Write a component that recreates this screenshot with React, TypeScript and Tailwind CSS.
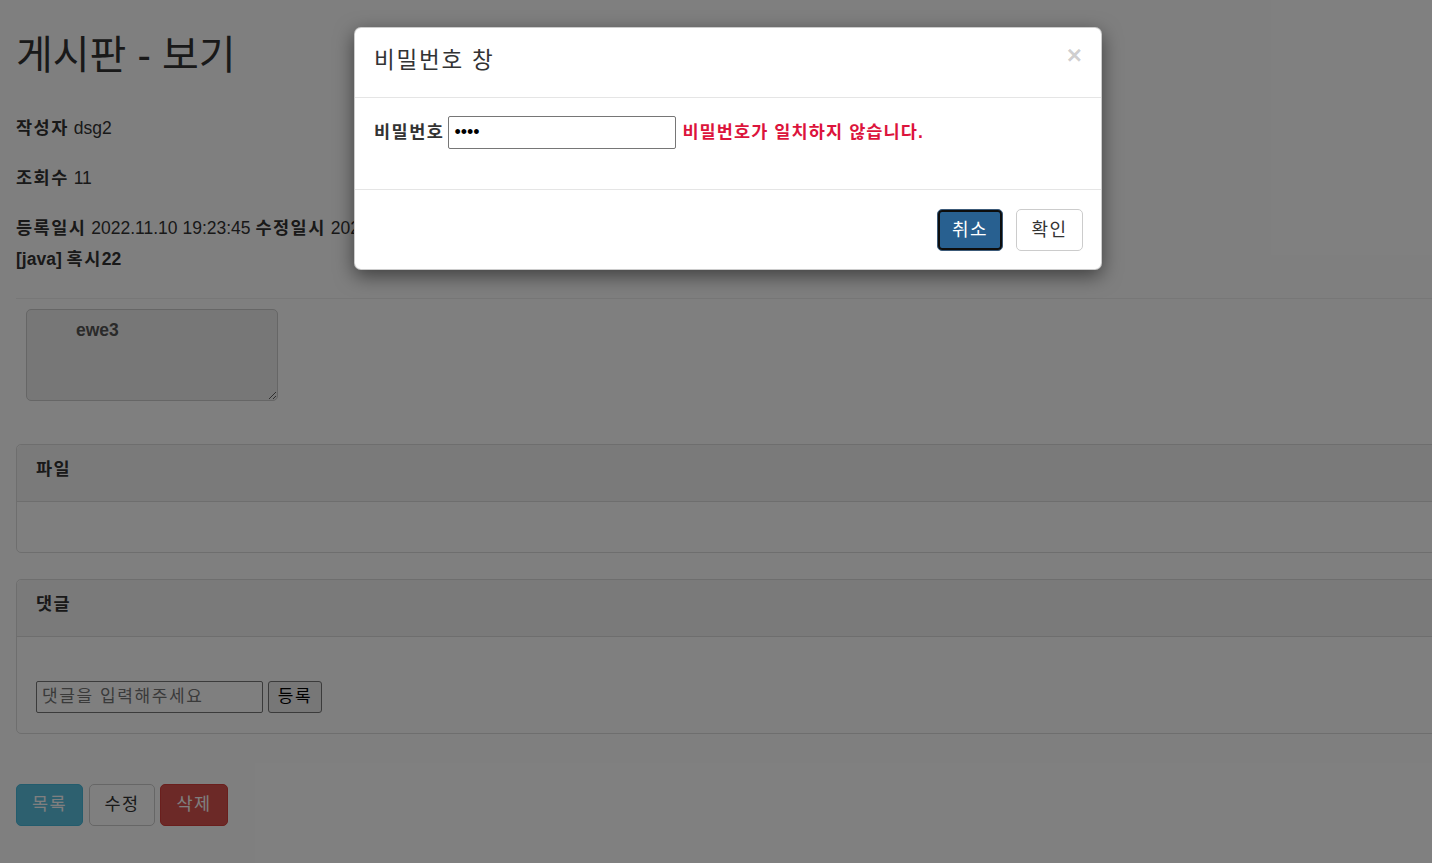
import React from "react";

const font = "font-['Liberation_Sans','Noto_Sans_CJK_KR',sans-serif]";

function Panel({ title, children, bodyClass }: { title: string; children?: React.ReactNode; bodyClass: string }) {
  return (
    <div className="rounded-[5px] border border-[#ddd] bg-white">
      <div className="h-[57px] rounded-t-[5px] border-b border-[#ddd] bg-[#f5f5f5] px-[19px] pt-[12px] font-bold tracking-[1.5px] text-[#333]">
        {title}
      </div>
      <div className={bodyClass}>{children}</div>
    </div>
  );
}

export default function App() {
  return (
    <div className={`relative h-[863px] w-full overflow-hidden bg-white text-[17.5px] leading-[25px] text-[#333] ${font}`}>
      {/* page under the modal */}
      <div className="w-[1480px] pl-4 pt-[30px]">
        <h1 className="m-0 h-[50px] text-[40px] font-normal leading-[50px]">게시판 - 보기</h1>
        <div className="mt-[35.5px]">
          <b className="tracking-[1.5px]">작성자</b> dsg2
        </div>
        <div className="mt-[25px]">
          <b className="tracking-[1.5px]">조회수</b> 11
        </div>
        <div className="mt-[25px] whitespace-nowrap">
          <b className="tracking-[1.5px]">등록일시</b> 2022.11.10 19:23:45 <b className="tracking-[1.5px]">수정일시</b> 2022.11.10 19:23:45
        </div>
        <div className="mt-[6px] font-bold">
          [java] <span className="tracking-[1.5px]">혹시</span>22
        </div>
        <hr className="mt-[26px] border-0 border-t border-[#eee]" />
        <textarea
          readOnly
          value="ewe3"
          className={`ml-[10px] mt-[10px] block h-[92px] w-[252px] rounded-[5px] border border-[#ccc] bg-[#eee] pl-[49px] pt-[8px] text-[17.5px] font-bold leading-[25px] text-[#555] ${font}`}
        />
        <div className="mt-[43px]">
          <Panel title="파일" bodyClass="h-[50px]" />
        </div>
        <div className="mt-[26px]">
          <Panel title="댓글" bodyClass="h-[96px] px-[19px] pt-[44px]">
            <div className="flex items-center">
              <input
                placeholder="댓글을 입력해주세요"
                className={`h-[32px] w-[227px] rounded-[2px] border border-[#767676] px-[5px] text-[17px] tracking-[1.6px] placeholder:text-[#757575] ${font}`}
              />
              <button className="ml-[5px] h-[32px] w-[54px] rounded-[3px] border border-[#767676] bg-[#efefef] text-[17px] tracking-[1.5px] text-black">
                등록
              </button>
            </div>
          </Panel>
        </div>
        <div className="mt-[50px] flex tracking-[1.5px]">
          <button className="h-[42px] w-[67px] rounded-[5px] border border-[#46b8da] bg-[#5bc0de] text-white">목록</button>
          <button className="ml-[6px] h-[42px] w-[66px] rounded-[5px] border border-[#ccc] bg-white text-[#333]">수정</button>
          <button className="ml-[5px] h-[42px] w-[68px] rounded-[5px] border border-[#d43f3a] bg-[#d9534f] text-white">삭제</button>
        </div>
      </div>

      {/* backdrop */}
      <div className="absolute inset-0 bg-black/50" />

      {/* modal */}
      <div className="absolute left-[354px] top-[27px] w-[748px] rounded-[7px] border border-black/20 bg-white shadow-[0_6px_19px_rgba(0,0,0,0.5)]">
        <div className="flex h-[70px] items-start justify-between border-b border-[#e5e5e5] px-[19px] pt-[17px]">
          <h4 className="m-0 text-[22.5px] font-normal leading-[32px] tracking-[1.8px] text-[#333]">비밀번호 창</h4>
          <span className="mt-[-6px] font-['Liberation_Sans',sans-serif] text-[26px] font-bold leading-[32px] text-black/20">×</span>
        </div>
        <div className="h-[91px] px-[19px] pt-[18px]">
          <div className="flex h-[33px] items-center whitespace-nowrap">
            <b className="tracking-[1.5px]">비밀번호</b>
            <input
              type="password"
              readOnly
              value="1234"
              className="ml-[4px] h-[33px] w-[228px] rounded-[2px] border border-[#767676] px-[5px] text-[18px] text-black"
            />
            <span className="ml-[6px] font-bold tracking-[1.1px] text-[#dc143c]">비밀번호가 일치하지 않습니다.</span>
          </div>
        </div>
        <div className="flex justify-end border-t border-[#e5e5e5] px-[18px] pb-[18px] pt-[19px] tracking-[1.5px]">
          <button className="h-[42px] w-[66px] rounded-[5px] border border-[#3c5a78] bg-[#286090] text-[18px] text-white shadow-[inset_0_0_0_2px_#0d0d0d]">
            취소
          </button>
          <button className="ml-[13px] h-[42px] w-[67px] rounded-[5px] border border-[#ccc] bg-white text-[18px] text-[#333]">
            확인
          </button>
        </div>
      </div>
    </div>
  );
}
